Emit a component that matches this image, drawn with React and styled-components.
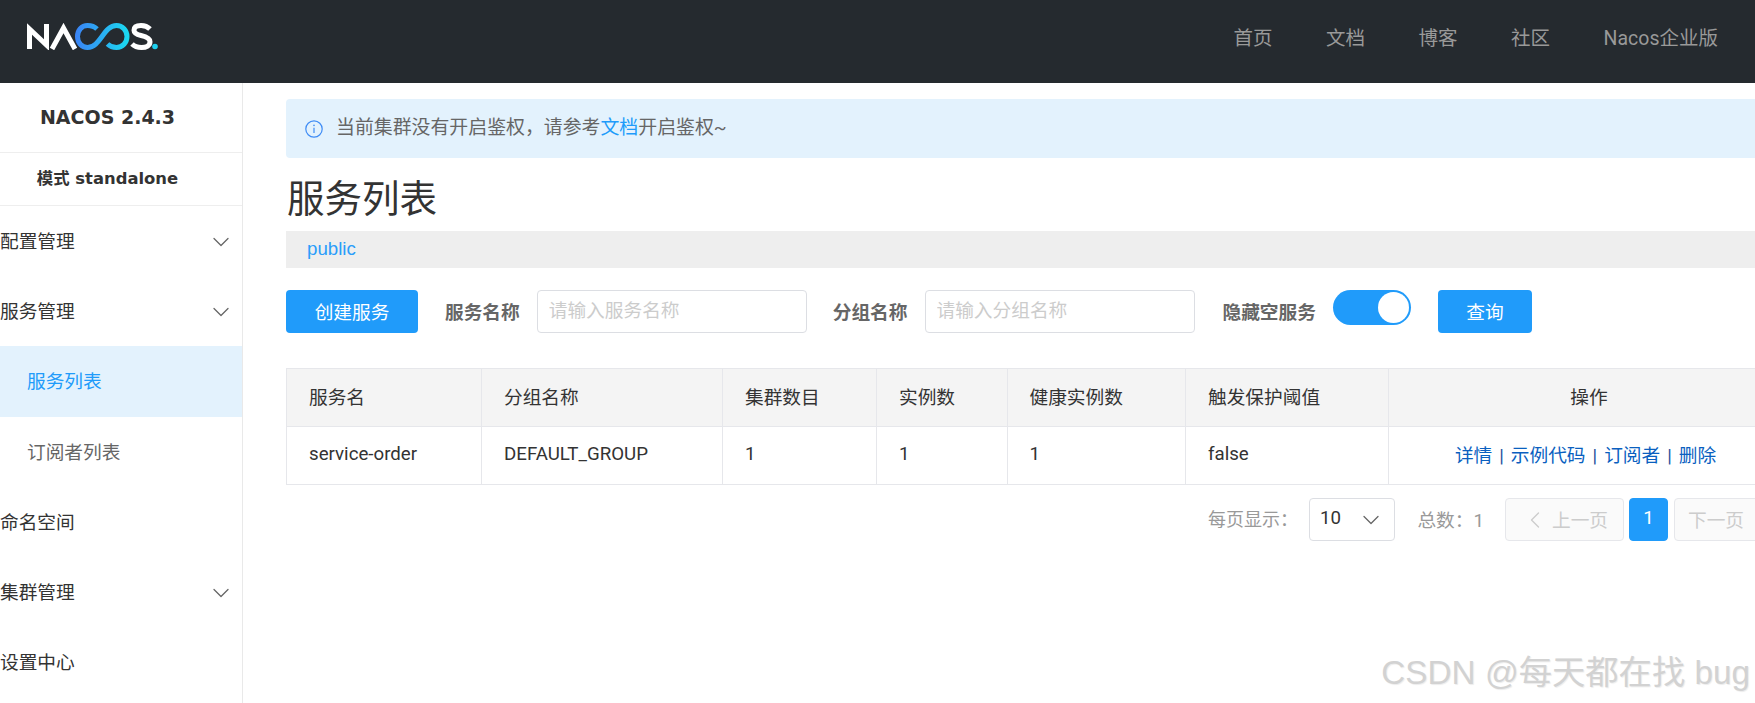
import React from 'react'
import styled, { createGlobalStyle } from 'styled-components'
import { ChevronDown, ChevronLeft } from 'lucide-react'

const CJK = '"Noto Sans CJK SC"'

const GlobalStyle = createGlobalStyle`
  html, body {
    margin: 0;
    padding: 0;
    height: 100%;
    overflow: hidden;
    background: #fff;
  }
  body {
    font-family: Roboto, ${CJK}, sans-serif;
    font-size: 18.7px;
    color: #333;
  }
  * { box-sizing: border-box; }
`

const menus = [
  { name: '配置管理', arrow: true },
  { name: '服务管理', arrow: true },
  { name: '服务列表', sub: true, active: true },
  { name: '订阅者列表', sub: true },
  { name: '命名空间' },
  { name: '集群管理', arrow: true },
  { name: '设置中心' },
]

const navs = ['首页', '文档', '博客', '社区', 'Nacos企业版']

const columns = [
  { title: '服务名', width: 195, value: 'service-order' },
  { title: '分组名称', width: 241, value: 'DEFAULT_GROUP' },
  { title: '集群数目', width: 154, value: '1' },
  { title: '实例数', width: 130.5, value: '1' },
  { title: '健康实例数', width: 178.5, value: '1' },
  { title: '触发保护阈值', width: 203, value: 'false' },
]

const actions = ['详情', '示例代码', '订阅者', '删除']

const Logo = () => (
  <svg width="132" height="27" viewBox="0 0 132 27" fill="none">
    <defs>
      <linearGradient id="loop" x1="50" y1="0" x2="104" y2="0" gradientUnits="userSpaceOnUse">
        <stop offset="0" stopColor="#3a84f5" />
        <stop offset="1" stopColor="#19dcf0" />
      </linearGradient>
    </defs>
    <path d="M3.5 26V6L20.5 22V1" stroke="#fff" strokeWidth="5" />
    <path d="M26 26L37.5 5L49 26" stroke="#fff" strokeWidth="5" />
    <path
      d="M71 6C68 3 65 2.5 61.5 2.5C55.5 2.5 51.5 7.5 51.5 13.5C51.5 19.5 55.5 24.5 61.5 24.5C68 24.5 72 19 76 13.5C80 8 84 2.5 90.5 2.5C96.5 2.5 101 7.5 101 13.5C101 19.5 96.5 24.5 90.5 24.5C87 24.5 84 23.5 81.5 21"
      stroke="url(#loop)"
      strokeWidth="5"
    />
    <path
      d="M124 6C121.5 3.5 118.5 2.5 115 2.5C110.5 2.5 108 4.3 108 7.3C108 10.3 110.5 11.5 115 12.5C120.5 13.7 124 15.2 124 18.8C124 22.5 120.5 24.5 115.5 24.5C112 24.5 108.5 23.5 106 21"
      stroke="#fff"
      strokeWidth="5"
    />
    <circle cx="129" cy="23.5" r="2.8" fill="#1fd0ef" />
  </svg>
)

const InfoIcon = () => (
  <svg width="18" height="18" viewBox="0 0 18 18" fill="none">
    <circle cx="9" cy="9" r="8.2" stroke="#3f8cf5" strokeWidth="1.2" />
    <path d="M9 7.8V13" stroke="#3f8cf5" strokeWidth="1.2" />
    <circle cx="9" cy="5.4" r="0.8" fill="#3f8cf5" />
  </svg>
)

const App = () => {
  return (
    <Page>
      <GlobalStyle />
      <Header>
        <LogoLink><Logo /></LogoLink>
        <HeaderNav>
          {navs.map((nav) => <a key={nav}>{nav}</a>)}
        </HeaderNav>
      </Header>

      <Body>
        <Sidebar>
          <SideTitle>NACOS 2.4.3</SideTitle>
          <SideMode>模式 standalone</SideMode>
          {menus.map((menu) => (
            <MenuItem key={menu.name} $sub={menu.sub} $active={menu.active}>
              {menu.name}
              {menu.arrow && <ChevronDown size={28} strokeWidth={1.1} />}
            </MenuItem>
          ))}
        </Sidebar>

        <Main>
          <Notice>
            <InfoIcon />
            <span>当前集群没有开启鉴权，请参考<a>文档</a>开启鉴权~</span>
          </Notice>
          <Title>服务列表</Title>
          <Namespace>public</Namespace>

          <Toolbar>
            <Button $width={132}>创建服务</Button>
            <FieldLabel $gap={27}>服务名称</FieldLabel>
            <TextInput placeholder="请输入服务名称" />
            <FieldLabel $gap={26}>分组名称</FieldLabel>
            <TextInput placeholder="请输入分组名称" />
            <FieldLabel $gap={28}>隐藏空服务</FieldLabel>
            <Switch />
            <Button $width={94}>查询</Button>
          </Toolbar>

          <Table>
            <colgroup>
              {columns.map((col) => <col key={col.title} style={{ width: col.width }} />)}
              <col />
            </colgroup>
            <thead>
              <tr>
                {columns.map((col) => <th key={col.title}>{col.title}</th>)}
                <th className="center">操作</th>
              </tr>
            </thead>
            <tbody>
              <tr>
                {columns.map((col) => <td key={col.title}>{col.value}</td>)}
                <td className="center actions">
                  {actions.map((action, i) => (
                    <React.Fragment key={action}>
                      {i > 0 && <Sep>|</Sep>}
                      <a>{action}</a>
                    </React.Fragment>
                  ))}
                </td>
              </tr>
            </tbody>
          </Table>

          <Pagination>
            <PageLabel>每页显示：</PageLabel>
            <PageSelect>
              10
              <ChevronDown size={28} strokeWidth={1.1} />
            </PageSelect>
            <PageTotal>总数：1</PageTotal>
            <PageButton $width={119}>
              <ChevronLeft size={28} strokeWidth={1.2} />
              上一页
            </PageButton>
            <PageButton $width={39} $current>1</PageButton>
            <PageButton $width={116} $next>下一页</PageButton>
          </Pagination>
        </Main>
      </Body>

      <Watermark>CSDN @每天都在找 bug</Watermark>
    </Page>
  )
}

const Page = styled.div`
  position: relative;
  width: 1755px;
  height: 703px;
  overflow: hidden;
`

const Header = styled.header`
  height: 83px;
  background: #252a2f;
  display: flex;
  align-items: center;
  justify-content: space-between;
  padding: 0 37px 0 26px;
`

const LogoLink = styled.a`
  display: flex;
  margin-top: -10px;
`

const HeaderNav = styled.nav`
  display: flex;
  gap: 53.5px;
  margin-top: -10px;

  a {
    font-size: 19.5px;
    color: #999;
  }
`

const Body = styled.div`
  display: flex;
  height: 620px;
`

const Sidebar = styled.aside`
  width: 243px;
  flex-shrink: 0;
  border-right: 1px solid #e9e9e9;
`

const SideTitle = styled.div`
  height: 70px;
  display: flex;
  align-items: center;
  justify-content: center;
  padding: 0 27px 2px 0;
  font-family: "DejaVu Sans", ${CJK}, sans-serif;
  font-weight: 700;
  font-size: 19px;
  color: #333;
  border-bottom: 1px solid #eee;
`

const SideMode = styled.div`
  height: 53px;
  display: flex;
  align-items: center;
  justify-content: center;
  padding: 0 27px 4px 0;
  font-family: "DejaVu Sans", ${CJK}, sans-serif;
  font-weight: 700;
  font-size: 16.4px;
  color: #333;
  border-bottom: 1px solid #eee;
`

const MenuItem = styled.div`
  height: 70.2px;
  display: flex;
  align-items: center;
  justify-content: space-between;
  padding: 0 7px 3px ${(p) => (p.$sub ? '27px' : '0')};
  color: ${(p) => (p.$active ? '#209bfa' : p.$sub ? '#666' : '#333')};
  background: ${(p) => (p.$active ? '#e3f2fd' : 'transparent')};

  svg {
    color: #666;
    margin-top: 5px;
  }
`

const Main = styled.main`
  width: 1504px;
  flex-shrink: 0;
  margin-left: 43px;
  padding-top: 16px;
`

const Notice = styled.div`
  height: 59px;
  display: flex;
  align-items: center;
  gap: 13px;
  padding: 0 19px;
  border-radius: 4px;
  background: #e3f2fd;
  color: #666;
  font-size: 18.9px;

  span { margin-top: -6px; }
  a { color: #209bfa; }
`

const Title = styled.h1`
  margin: 0;
  height: 73px;
  display: flex;
  align-items: center;
  padding: 1px 0 0 1px;
  font-size: 37.5px;
  font-weight: 400;
  color: #333;
`

const Namespace = styled.div`
  height: 37px;
  display: flex;
  align-items: center;
  padding: 0 0 2px 21px;
  background: #eee;
  color: #2a9dfa;
  font-family: "Liberation Sans", sans-serif;
`

const Toolbar = styled.div`
  display: flex;
  align-items: flex-start;
  margin-top: 22px;
  height: 78px;
`

const Button = styled.button`
  width: ${(p) => p.$width}px;
  height: 43px;
  border: 0;
  border-radius: 4px;
  background: #209bfa;
  color: #fff;
  font: inherit;
  font-size: 18.7px;
  padding: 0 0 3px;

  &:last-child { margin-left: 27px; }
`

const FieldLabel = styled.label`
  height: 43px;
  display: flex;
  align-items: center;
  margin-left: ${(p) => p.$gap}px;
  padding-bottom: 3px;
  font-weight: 700;
  color: #666;
`

const TextInput = styled.input`
  width: 270px;
  height: 43px;
  margin-left: 17px;
  padding: 0 11px 2px;
  border: 1px solid #dcdee3;
  border-radius: 4px;
  font: inherit;
  outline: none;

  &::placeholder { color: #ccc; }
`

const Switch = styled.span`
  position: relative;
  width: 78px;
  height: 35px;
  margin-left: 17px;
  border-radius: 18px;
  background: #209bfa;

  &::after {
    content: '';
    position: absolute;
    top: 2px;
    right: 2px;
    width: 31px;
    height: 31px;
    border-radius: 50%;
    background: #fff;
  }
`

const Table = styled.table`
  width: 100%;
  table-layout: fixed;
  border-collapse: collapse;

  th, td {
    height: 58px;
    padding: 0 22px 3px;
    border: 1px solid #e6e7eb;
    text-align: left;
    font-weight: 400;
    color: #333;
  }
  th {
    background: #f4f4f4;
    padding-bottom: 5px;
  }
  .center { text-align: center; }
  .actions {
    padding-right: 29px;
    padding-bottom: 5px;
  }
  td a { color: #0a5fbf; }
`

const Sep = styled.span`
  margin: 0 7px;
  color: #1a4f9c;
`

const Pagination = styled.div`
  display: flex;
  align-items: center;
  justify-content: flex-end;
  margin-top: 13px;
  height: 43px;
`

const PageLabel = styled.span`
  color: #999;
  font-size: 18px;
  margin-right: 11px;
  padding-bottom: 3px;
`

const PageSelect = styled.div`
  width: 86px;
  height: 43px;
  display: flex;
  align-items: center;
  justify-content: space-between;
  padding: 0 9px 3px 10px;
  border: 1px solid #dcdee3;
  border-radius: 4px;
  color: #333;

  svg {
    color: #666;
    margin-top: 3px;
  }
`

const PageTotal = styled.span`
  color: #999;
  margin: 0 21px 0 22.5px;
  padding-bottom: 3px;
`

const PageButton = styled.div`
  width: ${(p) => p.$width}px;
  height: 43px;
  display: flex;
  align-items: center;
  justify-content: ${(p) => (p.$next ? 'flex-start' : 'center')};
  gap: 3px;
  padding: 0 0 3px ${(p) => (p.$next ? '13px' : '0')};
  margin-right: ${(p) => (p.$current ? 6 : 5)}px;
  border-radius: 4px;
  border: 1px solid ${(p) => (p.$current ? '#209bfa' : '#e6e7eb')};
  background: ${(p) => (p.$current ? '#209bfa' : '#fafafa')};
  color: ${(p) => (p.$current ? '#fff' : '#ccc')};

  svg { margin-top: 3px; }
  &:last-child { margin-right: 0; }
`

const Watermark = styled.div`
  position: absolute;
  right: 5px;
  top: 652px;
  font-family: "Liberation Sans", ${CJK}, sans-serif;
  font-size: 33.3px;
  line-height: 42px;
  color: #d2d2d2;
  text-shadow: 1px 1px 1px #ececec;
  white-space: nowrap;
`

export default App
